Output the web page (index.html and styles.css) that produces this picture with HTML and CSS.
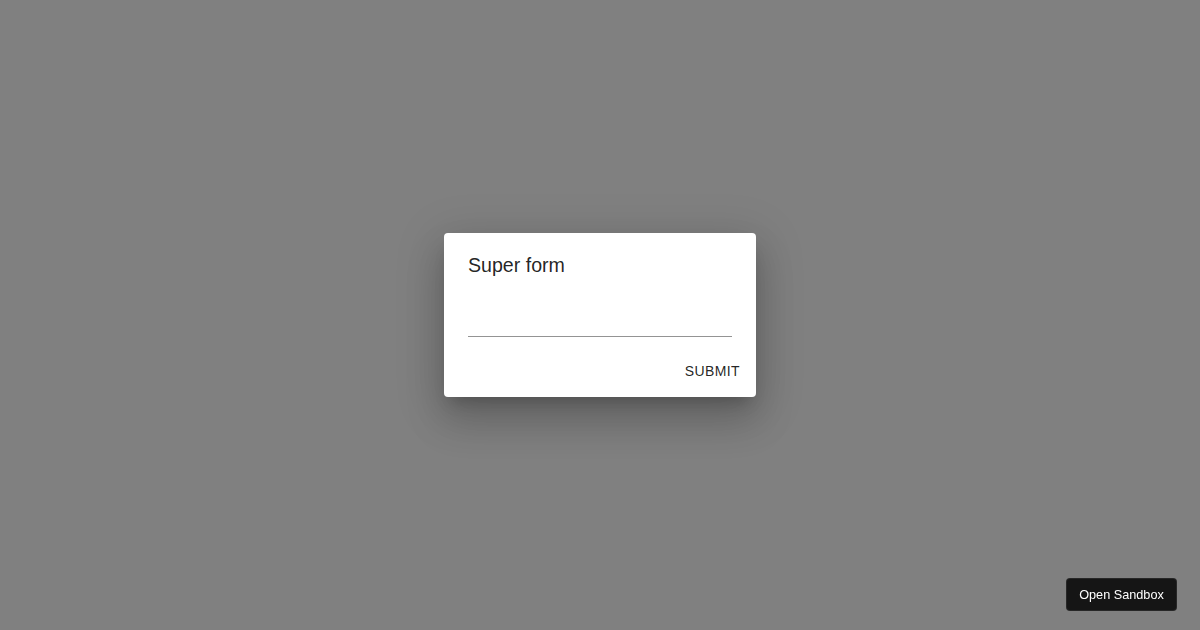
FILE: index.html
```html
<!DOCTYPE html>
<html>
<head>
<meta charset="utf-8">
<link rel="stylesheet" href="styles.css">
</head>
<body>
<div class="backdrop">
  <div class="dialog">
    <div class="dialog-title">Super form</div>
    <div class="dialog-content">
      <div class="field"><input class="field-input" type="text"></div>
    </div>
    <div class="dialog-actions">
      <button class="btn">Submit</button>
    </div>
  </div>
</div>
<a class="sandbox-btn">Open Sandbox</a>
</body>
</html>
```
FILE: styles.css
```css
html, body {
  margin: 0;
  padding: 0;
  height: 100%;
  font-family: "Liberation Sans", Arial, Helvetica, sans-serif;
}
body {
  background: #ffffff;
}
.backdrop {
  height: 630px;
  background: #808080;
  display: flex;
  align-items: center;
  justify-content: center;
}
.dialog {
  width: 312px;
  background: #ffffff;
  border-radius: 4px;
  box-shadow: 0px 11px 15px -7px rgba(0,0,0,0.2), 0px 24px 38px 3px rgba(0,0,0,0.14), 0px 9px 46px 8px rgba(0,0,0,0.12);
  display: flex;
  flex-direction: column;
}
.dialog-title {
  padding: 16px 24px;
  font-size: 19.6px;
  line-height: 32px;
  letter-spacing: 0;
  color: rgba(0,0,0,0.87);
}
.dialog-content {
  padding: 8px 24px;
}
.field {
  border-bottom: 1px solid rgba(0,0,0,0.42);
  height: 31px;
}
.field-input {
  display: block;
  width: 100%;
  box-sizing: border-box;
  border: 0;
  outline: none;
  background: transparent;
  padding: 6px 0 7px;
  height: 31px;
  font: inherit;
  font-size: 16px;
}
.dialog-actions {
  padding: 8px;
  display: flex;
  justify-content: flex-end;
}
.btn {
  border: 0;
  background: transparent;
  min-width: 64px;
  height: 36px;
  padding: 6px 8px;
  font-family: "Liberation Sans", Arial, sans-serif;
  font-size: 14px;
  letter-spacing: 0.02857em;
  text-transform: uppercase;
  color: rgba(0,0,0,0.87);
  border-radius: 4px;
}
.sandbox-btn {
  position: fixed;
  right: 23px;
  bottom: 19px;
  width: 111px;
  height: 33px;
  box-sizing: border-box;
  background: #151515;
  color: #ffffff;
  border-radius: 4px;
  border: 1px solid rgba(255,255,255,0.08);
  font-size: 12.7px;
  display: flex;
  align-items: center;
  justify-content: center;
}
```
